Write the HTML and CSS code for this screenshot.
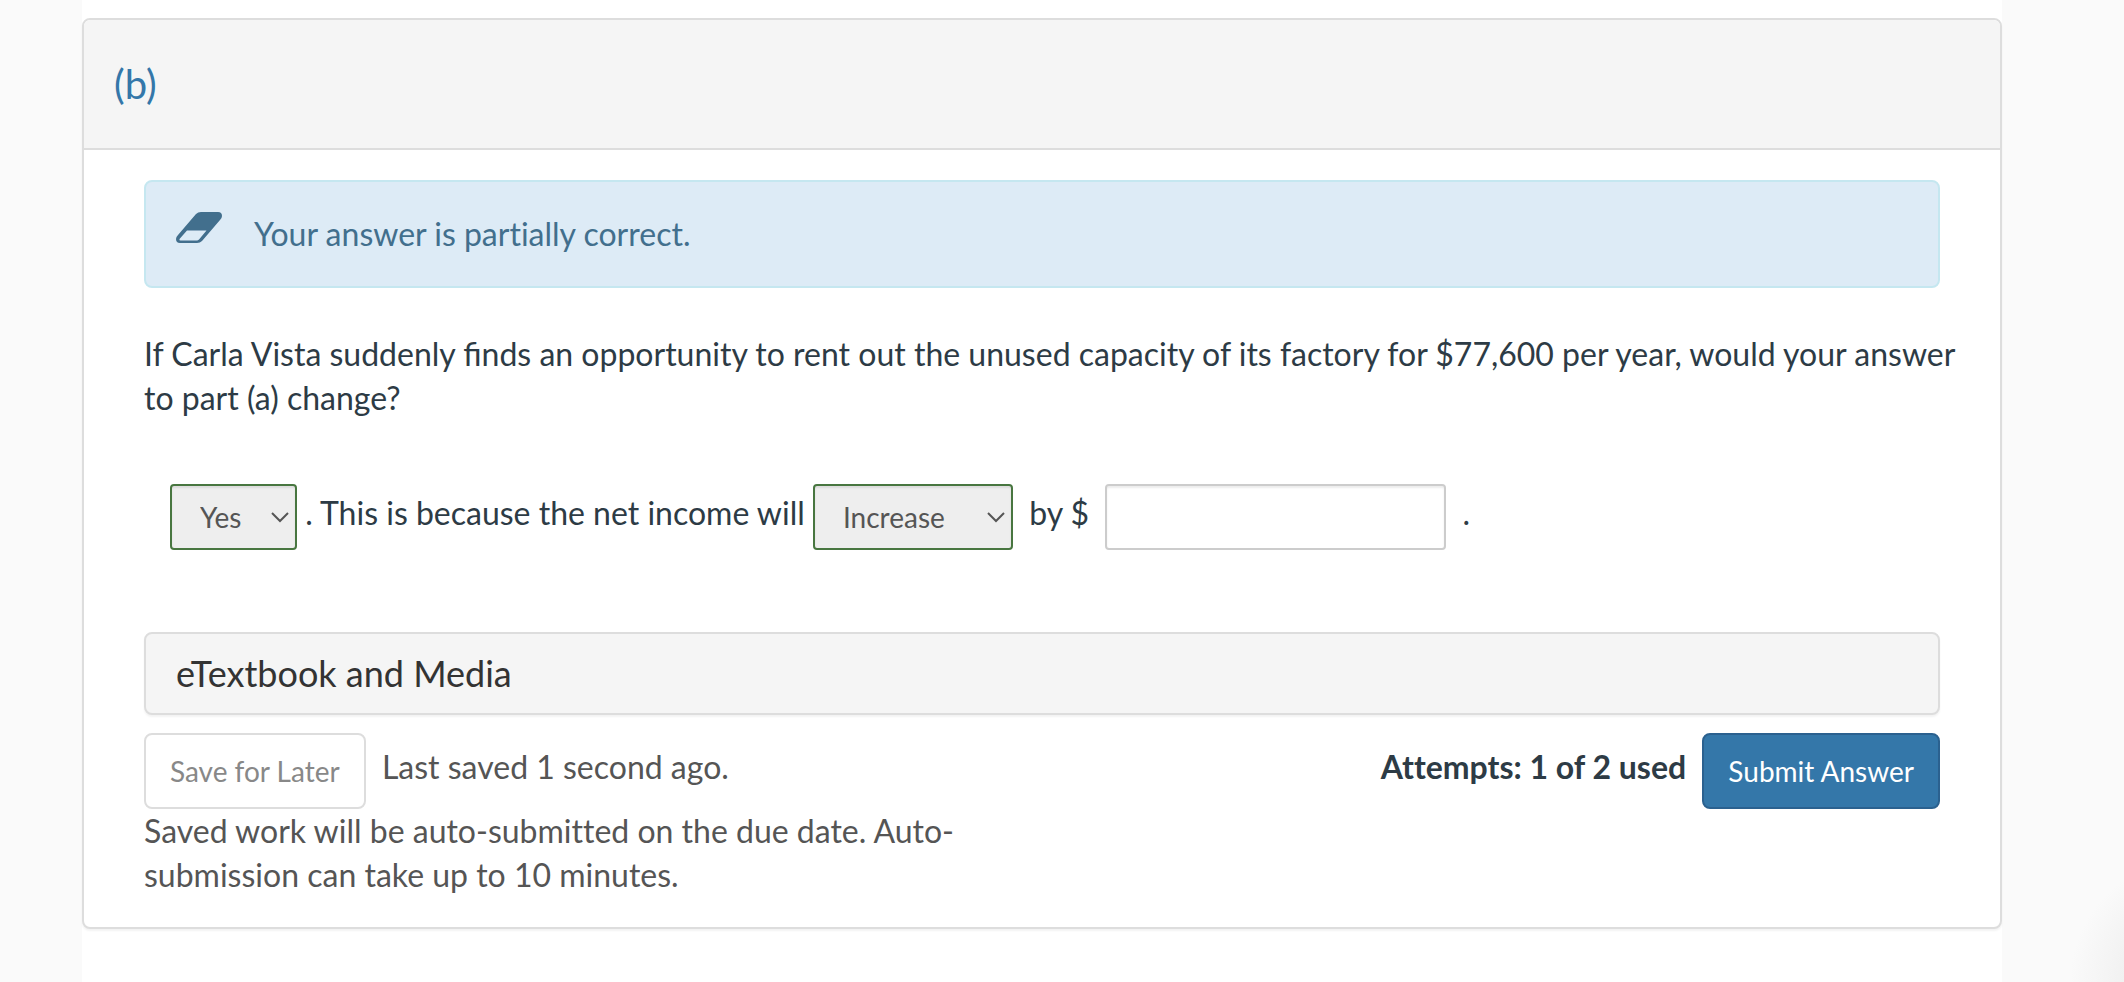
FILE: index.html
```html
<!DOCTYPE html>
<html lang="en">
<head>
    <meta charset="UTF-8">
    <meta name="viewport" content="width=device-width, initial-scale=1.0">
    <title>Question (b)</title>
    <link rel="stylesheet" href="styles.css">
</head>
<body>
    <main class="page">
        <section class="panel">
            <h2 class="panel-heading">(b)</h2>
            <div class="panel-body">
                <div class="alert" role="status">
                    <svg class="alert-icon" viewBox="0 0 46 31" aria-hidden="true">
                        <path fill="currentColor" fill-rule="evenodd" d="M25 0H42Q46 0 46 4Q46 6 44 8L26 29Q24 31 21 31H4Q0 31 0 27Q0 25 2 23L20 2Q22 0 25 0ZM11 18.500L3.500 27Q3 28.500 4.500 28.500H21Q22 28.500 23 27.500L30.500 18.500Z"/>
                    </svg>
                    <span>Your answer is partially correct.</span>
                </div>

                <p class="question">If Carla Vista suddenly finds an opportunity to rent out the unused capacity of its factory for $77,600 per year, would your answer to part (a) change?</p>

                <div class="answer">
                    <select class="field select-short" aria-label="Answer changes" disabled>
                        <option>Yes</option>
                        <option>No</option>
                    </select>
                    <span>. This is because the net income will</span>
                    <select class="field select-long" aria-label="Direction" disabled>
                        <option>Increase</option>
                        <option>Decrease</option>
                    </select>
                    <label class="amount-label" for="amount">by $</label>
                    <input class="field amount" id="amount" type="text">
                    <span class="period">.</span>
                </div>

                <div class="media">eTextbook and Media</div>

                <div class="footer">
                    <div class="footer-left">
                        <button class="btn btn-default" type="button" disabled>Save for Later</button>
                        <span class="saved">Last saved 1 second ago.</span>
                        <div class="note">Saved work will be auto-submitted on the due date. Auto-submission can take up to 10 minutes.</div>
                    </div>
                    <div class="footer-right">
                        <strong class="attempts">Attempts: 1 of 2 used</strong>
                        <button class="btn btn-primary" type="button">Submit Answer</button>
                    </div>
                </div>
            </div>
        </section>
    </main>
</body>
</html>
```

FILE: styles.css
```css
* {
    box-sizing: border-box;
}

body {
    margin: 0;
    padding: 0 122px 0 82px;
    min-height: 100vh;
    background: radial-gradient(circle at calc(100% + 70px) 100%, #ddd 0, #f1f1f1 70px, #fafafa 124px) #fafafa;
    color: #2d3b45;
    font-family: Lato, "Liberation Sans", sans-serif;
    font-size: 32px;
    line-height: 44px;
}

.page {
    min-height: 100vh;
    padding-top: 18px;
    background: #fff;
}

.panel {
    border: 2px solid #ddd;
    border-radius: 8px;
    background: #fff;
    box-shadow: 0 2px 2px rgba(0, 0, 0, 0.05);
}

.panel-heading {
    margin: 0;
    padding: 42px 30px;
    border-bottom: 2px solid #ddd;
    border-radius: 6px 6px 0 0;
    background: #f5f5f5;
    color: #3477a9;
    font-size: 40px;
    font-weight: 400;
}

.panel-body {
    padding: 30px 60px;
}

.alert {
    display: flex;
    align-items: flex-start;
    gap: 32px;
    padding: 30px;
    border: 2px solid #c5e7f0;
    border-radius: 8px;
    background: #ddebf6;
    color: #426f8d;
}

.alert,
.footer {
    font-variant-ligatures: none;
}

.alert-icon {
    width: 46px;
    height: 31px;
}

/* runs a little into the right padding of the panel */
.question {
    margin: 44px -24px 44px 0;
}

.answer {
    margin: 64px 0 82px;
    padding-left: 26px;
}

/* selects and the amount box share one height */
.field {
    height: 66px;
    border: 2px solid #ccc;
    border-radius: 4px;
    box-shadow: inset 0 2px 2px rgba(0, 0, 0, 0.075);
    color: #555;
    font-family: inherit;
    font-size: 28px;
    vertical-align: middle;
}

select.field {
    appearance: none;
    padding: 0 28px;
    border-color: #487640;
    background: #eee url("data:image/svg+xml,%3Csvg xmlns='http://www.w3.org/2000/svg' width='20' height='12'%3E%3Cpath d='M2 2l8 8 8-8' fill='none' stroke='%23555' stroke-width='2'/%3E%3C/svg%3E") no-repeat right 5px center;
    opacity: 1;
}

.select-short {
    width: 127px;
}

.select-long {
    width: 200px;
    margin-right: 8px;
}

.amount {
    width: 341px;
    margin: 0 8px;
    padding: 0 24px;
    background: #fff;
}

.media {
    padding: 18px 30px;
    border: 2px solid #ddd;
    border-radius: 8px;
    background: #f5f5f5;
    box-shadow: 0 2px 2px rgba(0, 0, 0, 0.05);
    color: #333;
    font-size: 36px;
    font-variant-ligatures: none;
    line-height: 43px;
}

.footer {
    display: flex;
    margin-top: 18px;
}

.footer-left,
.footer-right {
    flex: 1;
    color: #555;
}

.footer-left {
    padding-right: 30px;
}

.footer-right {
    color: #2d3b45;
    text-align: right;
}

.btn {
    height: 76px;
    padding: 0 24px;
    border: 2px solid #ddd;
    border-radius: 8px;
    font-family: inherit;
    font-size: 28px;
    font-variant-ligatures: none;
    vertical-align: middle;
}

.btn-default {
    background: #fff;
    color: #888;
}

.btn-primary {
    border-color: #2b618f;
    background: #3477a9;
    color: #fff;
}

.saved,
.attempts {
    margin: 0 8px;
}
```
